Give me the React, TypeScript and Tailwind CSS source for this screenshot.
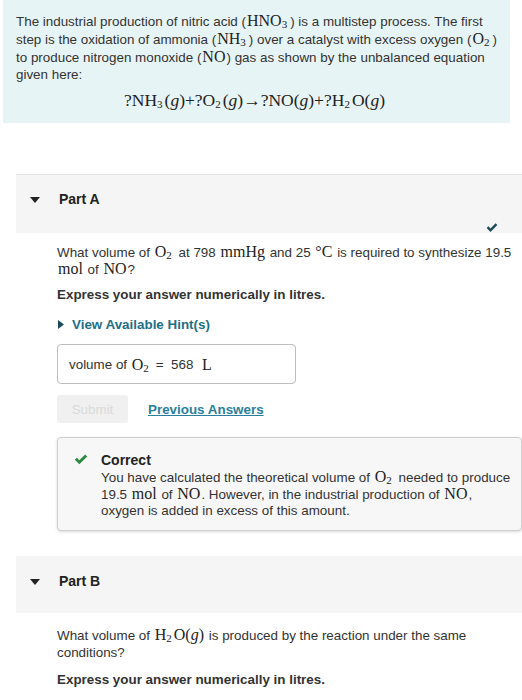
import React from "react";

const M = ({ children, big }: { children: React.ReactNode; big?: boolean }) => (
  <span
    className={
      big
        ? "font-['Liberation_Serif',serif] text-[17.5px] text-[#222]"
        : "font-['Liberation_Serif',serif] text-[16px] text-[#222] mx-[1px]"
    }
  >
    {children}
  </span>
);
const Sub = ({ children }: { children: React.ReactNode }) => (
  <sub className="text-[11px] bottom-[-0.2em] mr-[2px]">{children}</sub>
);

const Check = ({ color, size }: { color: string; size: number }) => (
  <svg width={size} height={size * 0.78} viewBox="0 0 18 14">
    <path d="M1 7.5 L3.6 4.9 L6.8 8.1 L14.4 0.5 L17 3.1 L6.8 13.3 Z" fill={color} />
  </svg>
);

const Down = () => (
  <svg width="10" height="6" viewBox="0 0 10 6">
    <path d="M0 0 H10 L5 6 Z" fill="#222" />
  </svg>
);

export default function App() {
  return (
    <div className="w-[522px] min-h-[700px] bg-white overflow-hidden font-['Liberation_Sans',Arial,sans-serif] text-[13.4px] leading-[17px] text-[#333]">
      <div className="ml-[3px] w-[507px] bg-[#e7f4f5] px-[13px] pt-[12px] pb-[13px]">
        <p className="whitespace-nowrap">
          The industrial production of nitric acid (<M>HNO<Sub>3</Sub></M>) is a multistep process. The first
          <br />
          step is the oxidation of ammonia (<M>NH<Sub>3</Sub></M>) over a catalyst with excess oxygen (<M>O<Sub>2</Sub></M>)
          <br />
          to produce nitrogen monoxide (<M>NO</M>) gas as shown by the unbalanced equation
          <br />
          given here:
        </p>
        <div className="mt-[7px] h-[20px] flex items-center justify-center pl-[4px] pr-[8px]">
          <M big>
            ?NH<Sub>3</Sub>(<i>g</i>)+?O<Sub>2</Sub>(<i>g</i>)→?NO(<i>g</i>)+?H<Sub>2</Sub>O(<i>g</i>)
          </M>
        </div>
      </div>

      <div className="mt-[51px] ml-[16px] h-[59px] bg-[#f5f5f5] border-t border-[#e4e4e4] flex flex-col">
        <div className="flex items-center pt-[16px] h-[33px]">
          <div className="w-[43px] flex justify-end pr-[19px]">
            <Down />
          </div>
          <span className="font-bold text-[14px] text-[#222]">Part A</span>
        </div>
        <div className="flex justify-end pr-[24px] mt-[15px]">
          <Check color="#1d4b59" size={12} />
        </div>
      </div>

      <div className="ml-[57px] pr-[4px]">
        <p className="mt-[11px] leading-[16px] whitespace-nowrap">
          What volume of <M>O<Sub>2</Sub></M> at 798 <M>mmHg</M> and 25 <M>°C</M> is required to synthesize 19.5
          <br />
          <M>mol</M> of <M>NO</M>?
        </p>
        <p className="mt-[8px] font-bold text-[#333]">Express your answer numerically in litres.</p>
        <div className="mt-[13px] flex items-center gap-[8px] font-bold text-[#1f6f86]">
          <svg width="6" height="9" viewBox="0 0 6 9" className="ml-[1px]">
            <path d="M0 0 L6 4.5 L0 9 Z" fill="#1d4b59" />
          </svg>
          <span>View Available Hint(s)</span>
        </div>
        <div className="mt-[11px] w-[239px] h-[40px] border border-[#bdbdbd] rounded-[4px] flex items-center px-[11px]">
          <span>volume of&nbsp;</span>
          <M>O<Sub>2</Sub></M>
          <span className="ml-[4px]">=&nbsp;&nbsp;568&nbsp;&nbsp;</span>
          <M>L</M>
        </div>
        <div className="mt-[11px] flex items-center">
          <div className="w-[71px] h-[28px] bg-[#f0f0f0] rounded-[2px] flex items-center justify-center text-[#dadada]">
            Submit
          </div>
          <span className="ml-[20px] font-bold underline text-[#2a7f9c]">Previous Answers</span>
        </div>
        <div className="mt-[14px] w-[465px] h-[94px] border border-[#cfcfcf] rounded-[4px] bg-[#f7f7f7] shadow-[0_1px_3px_rgba(0,0,0,0.15)] flex pt-[13px]">
          <div className="w-[43px] flex justify-end pr-[13px] pt-[3px]">
            <Check color="#2b8a3e" size={14} />
          </div>
          <div className="leading-[16px] whitespace-nowrap">
            <div className="font-semibold text-[14px] text-[#222] leading-[18px]">Correct</div>
            <p>
              You have calculated the theoretical volume of <M>O<Sub>2</Sub></M> needed to produce
              <br />
              19.5 <M>mol</M> of <M>NO</M>. However, in the industrial production of <M>NO</M>,
              <br />
              oxygen is added in excess of this amount.
            </p>
          </div>
        </div>
      </div>

      <div className="mt-[25px] ml-[16px] h-[57px] bg-[#f5f5f5] flex items-start">
        <div className="flex items-center pt-[17px] h-[34px]">
          <div className="w-[43px] flex justify-end pr-[19px]">
            <Down />
          </div>
          <span className="font-bold text-[14px] text-[#222]">Part B</span>
        </div>
      </div>

      <div className="ml-[57px] pr-[4px]">
        <p className="mt-[13px] leading-[17px] whitespace-nowrap">
          What volume of <M>H<Sub>2</Sub>O(<i>g</i>)</M> is produced by the reaction under the same
          <br />
          conditions?
        </p>
        <p className="mt-[10px] font-bold text-[#333]">Express your answer numerically in litres.</p>
      </div>
    </div>
  );
}
